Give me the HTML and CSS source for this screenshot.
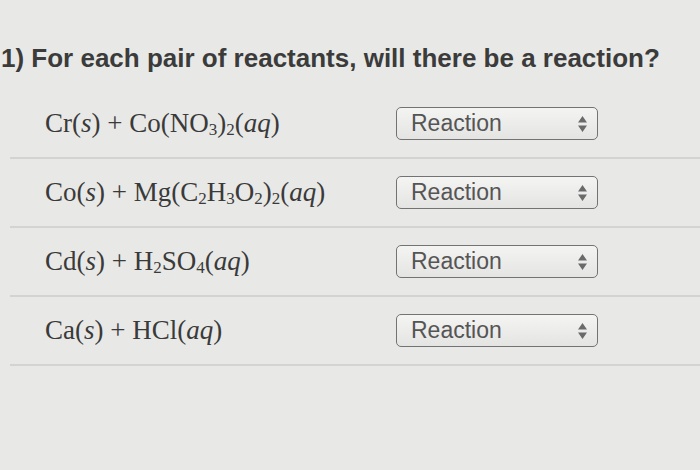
FILE: index.html
```html
<!DOCTYPE html>
<html>
<head>
	<meta charset="UTF-8">
	<title>Reactions</title>
	<link rel="stylesheet" href="styles.css">
</head>
<body>
<div class="question">
	<h2 class="title">1) For each pair of reactants, will there be a reaction?</h2>

	<div class="row">
		<div class="formula">Cr(<i>s</i>) + Co(NO<sub>3</sub>)<sub>2</sub>(<i>aq</i>)</div>
		<div class="choice">
			<span>Reaction</span>
			<svg width="9" height="16" viewBox="0 0 9 16"><path d="M4.5 0 L9 6.5 L0 6.5 Z M0 9.5 L9 9.5 L4.5 16 Z" fill="#6a6a6a"/></svg>
		</div>
	</div>

	<div class="row">
		<div class="formula">Co(<i>s</i>) + Mg(C<sub>2</sub>H<sub>3</sub>O<sub>2</sub>)<sub>2</sub>(<i>aq</i>)</div>
		<div class="choice">
			<span>Reaction</span>
			<svg width="9" height="16" viewBox="0 0 9 16"><path d="M4.5 0 L9 6.5 L0 6.5 Z M0 9.5 L9 9.5 L4.5 16 Z" fill="#6a6a6a"/></svg>
		</div>
	</div>

	<div class="row">
		<div class="formula">Cd(<i>s</i>) + H<sub>2</sub>SO<sub>4</sub>(<i>aq</i>)</div>
		<div class="choice">
			<span>Reaction</span>
			<svg width="9" height="16" viewBox="0 0 9 16"><path d="M4.5 0 L9 6.5 L0 6.5 Z M0 9.5 L9 9.5 L4.5 16 Z" fill="#6a6a6a"/></svg>
		</div>
	</div>

	<div class="row">
		<div class="formula">Ca(<i>s</i>) + HCl(<i>aq</i>)</div>
		<div class="choice">
			<span>Reaction</span>
			<svg width="9" height="16" viewBox="0 0 9 16"><path d="M4.5 0 L9 6.5 L0 6.5 Z M0 9.5 L9 9.5 L4.5 16 Z" fill="#6a6a6a"/></svg>
		</div>
	</div>
</div>
</body>
</html>
```
FILE: styles.css
```css
body {
	margin: 0;
	background: #e8e8e6;
	color: #3a3a3a;
	font-family: "Liberation Sans", Arial, sans-serif;
}
.question {
	padding-top: 43px;
}
.title {
	margin: 0 0 16px 0;
	padding-left: 1px;
	font-size: 26px;
	font-weight: bold;
	color: #3b3b3b;
}
.row {
	display: flex;
	align-items: center;
	height: 67px;
	margin-left: 10px;
	border-bottom: 2px solid #d3d3d1;
}
.formula {
	width: 351px;
	padding-left: 35px;
	font-family: "Liberation Serif", "Times New Roman", serif;
	font-size: 27px;
	color: #3a3a3a;
}
.formula sub {
	font-size: 17px;
	vertical-align: -3px;
	line-height: 0;
}
.choice {
	display: flex;
	align-items: center;
	justify-content: space-between;
	box-sizing: border-box;
	width: 202px;
	height: 33px;
	padding: 0 10px 0 14px;
	border: 1.5px solid #737373;
	border-radius: 5px;
	background: linear-gradient(#f4f4f3, #e4e4e3);
	font-size: 23px;
	color: #555;
}
```
